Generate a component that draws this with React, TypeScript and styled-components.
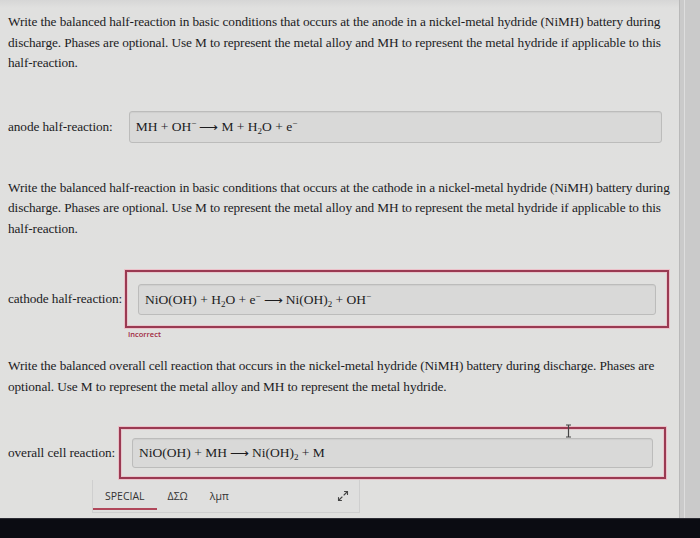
import React from "react";
import styled, { createGlobalStyle } from "styled-components";

const GlobalStyle = createGlobalStyle`
  html, body { margin: 0; padding: 0; }
  body {
    background: #dcdcdb;
    font-family: "Liberation Serif", "Times New Roman", serif;
    color: #1c1c1e;
  }
`;

const Page = styled.div`
  width: 700px;
  height: 538px;
  display: flex;
  flex-direction: column;
  overflow: hidden;
`;

const Screen = styled.div`
  flex: 0 0 518px;
  display: flex;
`;

const Main = styled.div`
  flex: 1;
  background: linear-gradient(180deg, #d6d6d6 0px, #e0e0df 8px, #e0e0de 100%);
  padding: 12px 0 0 8px;
  display: flex;
  flex-direction: column;
`;

const RightStrip = styled.div`
  flex: 0 0 21px;
  background: #cacaca;
  border-left: 1px solid #b9b9b9;
  display: flex;
  padding-left: 4px;
  box-sizing: border-box;
`;

const StripLine = styled.div`
  width: 1px;
  background: #dedede;
`;

const BlackBar = styled.div`
  flex: 1;
  background: #0b0c12;
  border-top: 1px solid #2c2c34;
`;

const Prompt = styled.p<{ $top: number }>`
  margin: ${(p) => p.$top}px 0 0 0;
  font-size: 13.3px;
  line-height: 20.5px;
  letter-spacing: -0.1px;
  width: 664px;
`;

const Row = styled.div<{ $top: number; $gap: number }>`
  margin-top: ${(p) => p.$top}px;
  display: flex;
  align-items: center;
  gap: ${(p) => p.$gap}px;
`;

const Label = styled.span`
  font-size: 13.3px;
  letter-spacing: -0.1px;
  white-space: nowrap;
`;

const Input = styled.div<{ $w: number; $h: number }>`
  width: ${(p) => p.$w}px;
  height: ${(p) => p.$h}px;
  box-sizing: border-box;
  background: #d9d9d8;
  border: 1px solid #bcbcbb;
  border-radius: 3px;
  box-shadow: inset 0 1px 1px rgba(0, 0, 0, 0.05);
  display: flex;
  align-items: center;
  padding-left: 6px;
  font-size: 13.5px;
  white-space: nowrap;
`;

const Expr = styled.span`
  display: inline-block;
  line-height: 16px;
`;

const ErrorBox = styled.div<{ $w: number; $h: number; $pt: number }>`
  position: relative;
  width: ${(p) => p.$w}px;
  height: ${(p) => p.$h}px;
  box-sizing: border-box;
  border: 2px solid #9a3a52;
  box-shadow: 0 0 0 1px #ebc0c8, inset 0 0 0 1px #e8c6cc;
  padding: ${(p) => p.$pt}px 11px 0 11px;
  display: flex;
  align-items: flex-start;
`;

const Feedback = styled.div`
  margin: 1px 0 0 120px;
  font-family: "Open Sans", "Liberation Sans", sans-serif;
  font-size: 7.5px;
  font-weight: 600;
  color: #a0283e;
  line-height: 10px;
`;

const Sub = styled.sub`
  font-size: 9px;
  vertical-align: -3px;
  line-height: 0;
`;

const Sup = styled.sup`
  font-size: 9px;
  vertical-align: 5px;
  line-height: 0;
`;

const Arrow = styled.span`
  display: inline-block;
  margin: 0 4px;
  font-size: 12px;
  transform: scaleX(1.1);
`;

const Cursor = styled.svg`
  position: absolute;
  top: -5px;
  right: 92px;
`;

const Toolbar = styled.div`
  margin: 1px 0 0 84px;
  width: 268px;
  height: 33px;
  box-sizing: border-box;
  border-left: 1px solid #cfcfcf;
  border-bottom: 1px solid #cfcfcf;
  border-right: 1px solid #cfcfcf;
  background: #dfdfde;
  display: flex;
  align-items: center;
  position: relative;
`;

const Tab = styled.span<{ $active?: boolean }>`
  position: relative;
  height: 100%;
  display: flex;
  align-items: center;
  padding: 0 ${(p) => (p.$active ? "12px" : "11px")};
  font-family: "Open Sans", "Liberation Sans", sans-serif;
  font-size: 10.5px;
  color: #333;
  ${(p) =>
    p.$active
      ? `&::after { content: ""; position: absolute; left: 0; right: 0; bottom: 2px; height: 2px; background: #b0475a; }`
      : ""}
`;

const Expand = styled.svg`
  margin-left: auto;
  margin-right: 10px;
`;

const Formula = {
  anode: (
    <Expr>
      MH + OH<Sup>−</Sup>
      <Arrow>⟶</Arrow>M + H<Sub>2</Sub>O + e<Sup>−</Sup>
    </Expr>
  ),
  cathode: (
    <Expr>
      NiO(OH) + H<Sub>2</Sub>O + e<Sup>−</Sup>
      <Arrow>⟶</Arrow>Ni(OH)<Sub>2</Sub> + OH<Sup>−</Sup>
    </Expr>
  ),
  overall: (
    <Expr>
      NiO(OH) + MH<Arrow>⟶</Arrow>Ni(OH)<Sub>2</Sub> + M
    </Expr>
  ),
};

export default function App() {
  return (
    <>
      <GlobalStyle />
      <Page>
        <Screen>
          <Main>
            <Prompt $top={0}>
              Write the balanced half-reaction in basic conditions that occurs at the anode in a nickel-metal hydride (NiMH) battery during
              discharge. Phases are optional. Use M to represent the metal alloy and MH to represent the metal hydride if applicable to this
              half-reaction.
            </Prompt>

            <Row $top={37} $gap={16}>
              <Label>anode half-reaction:</Label>
              <Input $w={533} $h={32}>{Formula.anode}</Input>
            </Row>

            <Prompt $top={35}>
              Write the balanced half-reaction in basic conditions that occurs at the cathode in a nickel-metal hydride (NiMH) battery during
              discharge. Phases are optional. Use M to represent the metal alloy and MH to represent the metal hydride if applicable to this
              half-reaction.
            </Prompt>

            <Row $top={31} $gap={3}>
              <Label>cathode half-reaction:</Label>
              <ErrorBox $w={544} $h={58} $pt={12}>
                <Input $w={518} $h={31}>{Formula.cathode}</Input>
              </ErrorBox>
            </Row>
            <Feedback>Incorrect</Feedback>

            <Prompt $top={17}>
              Write the balanced overall cell reaction that occurs in the nickel-metal hydride (NiMH) battery during discharge. Phases are
              optional. Use M to represent the metal alloy and MH to represent the metal hydride.
            </Prompt>

            <Row $top={30} $gap={4}>
              <Label>overall cell reaction:</Label>
              <ErrorBox $w={547} $h={52} $pt={9}>
                <Input $w={522} $h={30}>{Formula.overall}</Input>
                <Cursor width="7" height="14" viewBox="0 0 7 14">
                  <path d="M1 1 H3 Q3.5 1.5 4 1 H6 M3.5 1.5 V12.5 M1 13 H3 Q3.5 12.5 4 13 H6" stroke="#444" strokeWidth="1.2" fill="none" />
                </Cursor>
              </ErrorBox>
            </Row>

            <Toolbar>
              <Tab $active>SPECIAL</Tab>
              <Tab>ΔΣΩ</Tab>
              <Tab>λμπ</Tab>
              <Expand width="12" height="12" viewBox="0 0 24 24" fill="none" stroke="#444" strokeWidth="2.2" strokeLinecap="round" strokeLinejoin="round">
                <polyline points="15 3 21 3 21 9" />
                <polyline points="9 21 3 21 3 15" />
                <line x1="21" y1="3" x2="14" y2="10" />
                <line x1="3" y1="21" x2="10" y2="14" />
              </Expand>
            </Toolbar>
          </Main>
          <RightStrip>
            <StripLine />
          </RightStrip>
        </Screen>
        <BlackBar />
      </Page>
    </>
  );
}
